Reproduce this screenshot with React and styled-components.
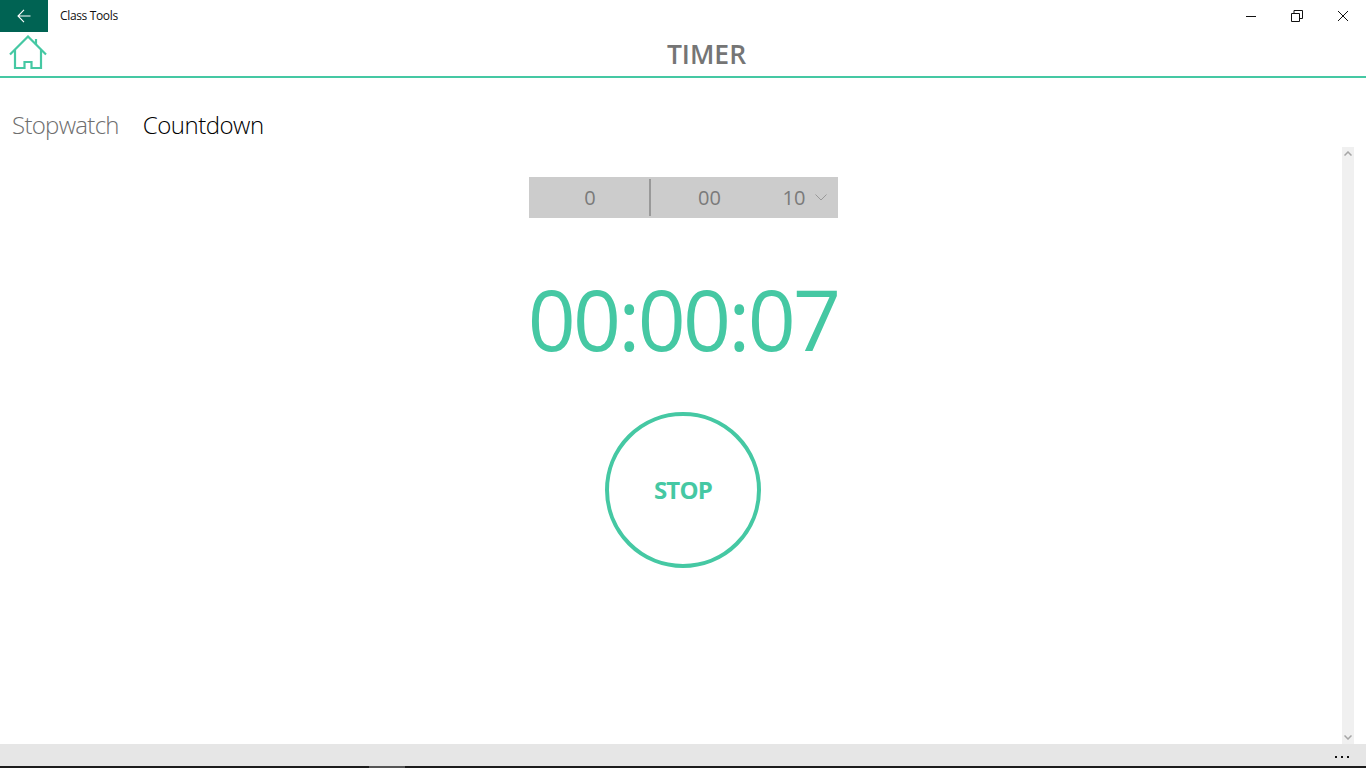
import React from 'react';
import styled, { createGlobalStyle } from 'styled-components';

const GlobalStyle = createGlobalStyle`
  html, body {
    margin: 0;
    padding: 0;
    background: #fff;
  }
  body {
    font-family: "Open Sans", "Noto Sans", sans-serif;
  }
`;

const App = () => {
  return (
    <Page>
      <GlobalStyle />
      <TitleBar>
        <BackButton>
          <svg width="16" height="16" viewBox="0 0 16 16" fill="none" stroke="#fff" strokeWidth="1.1">
            <path d="M2.5 8H14.5M8 1.8L2 8l6 6.2" />
          </svg>
        </BackButton>
        <AppName>Class Tools</AppName>
        <WindowControls>
          <WindowButton>
            <svg width="12" height="12" viewBox="0 0 12 12" stroke="#111" fill="none">
              <path d="M1 6.5H11" />
            </svg>
          </WindowButton>
          <WindowButton>
            <svg width="12" height="12" viewBox="0 0 12 12" stroke="#111" fill="none">
              <path d="M.5 3.5h8v8h-8zM3 3.5V.5h8.500v8H8.500" />
            </svg>
          </WindowButton>
          <WindowButton>
            <svg width="12" height="12" viewBox="0 0 12 12" stroke="#111" fill="none">
              <path d="M1 1L11 11M11 1L1 11" />
            </svg>
          </WindowButton>
        </WindowControls>
      </TitleBar>

      <Header>
        <HomeLink>
          <svg width="38" height="36" viewBox="0 0 38 36" fill="none" stroke="#45c8a3" strokeWidth="2.2">
            <path d="M1 19.500L19 1.500l18 18" />
            <path d="M27 10V4" />
            <path d="M6 15v18h9.500v-6h7v6H32V15" />
          </svg>
        </HomeLink>
        <PageTitle>TIMER</PageTitle>
      </Header>

      <Tabs>
        <Tab>Stopwatch</Tab>
        <Tab $active>Countdown</Tab>
      </Tabs>

      <ScrollArea>
        <Content>
          <TimePicker>
            <PickerCell $width={120} $nudge={3}>0</PickerCell>
            <PickerDivider />
            <PickerCell $width={118}>00</PickerCell>
            <PickerLast>
              10
              <svg width="12" height="7" viewBox="0 0 12 7" fill="none" stroke="#999">
                <path d="M.5.500L6 6l5.500-5.500" />
              </svg>
            </PickerLast>
          </TimePicker>
          <Clock>00:00:07</Clock>
          <StopButton>STOP</StopButton>
        </Content>
        <ScrollBar>
          <svg width="8" height="5" viewBox="0 0 8 5" fill="none" stroke="#a6a6a6" strokeWidth="1.500">
            <path d="M.5 4.500L4 1l3.500 3.500" />
          </svg>
          <svg width="8" height="5" viewBox="0 0 8 5" fill="none" stroke="#a6a6a6" strokeWidth="1.500">
            <path d="M.5.500L4 4l3.500-3.500" />
          </svg>
        </ScrollBar>
      </ScrollArea>

      <CommandBar>
        <MoreDots>
          <Dot />
          <Dot />
          <Dot />
        </MoreDots>
      </CommandBar>
      <Taskbar>
        <TaskbarItem />
      </Taskbar>
    </Page>
  );
};

const Page = styled.div`
  width: 1366px;
  height: 768px;
  display: flex;
  flex-direction: column;
  overflow: hidden;
  background: #fff;
`;

const TitleBar = styled.div`
  height: 32px;
  display: flex;
  align-items: center;
  flex: none;
`;

const BackButton = styled.div`
  width: 48px;
  height: 32px;
  background: #006353;
  display: flex;
  align-items: center;
  justify-content: center;
`;

const AppName = styled.div`
  margin-left: 12px;
  margin-top: -1px;
  font-size: 12px;
  letter-spacing: -0.35px;
  color: #111;
`;

const WindowControls = styled.div`
  margin-left: auto;
  display: flex;
`;

const WindowButton = styled.div`
  width: 46px;
  height: 32px;
  display: flex;
  align-items: center;
  justify-content: center;
`;

const Header = styled.div`
  height: 44px;
  flex: none;
  border-bottom: 2px solid #45c8a3;
  display: flex;
  align-items: center;
  justify-content: center;
  position: relative;
`;

const HomeLink = styled.div`
  position: absolute;
  left: 9px;
  top: 3px;
  height: 36px;
`;

const PageTitle = styled.div`
  font-size: 26.5px;
  font-weight: 600;
  color: #757575;
  margin-left: 47px;
`;

const Tabs = styled.div`
  height: 69px;
  flex: none;
  display: flex;
  align-items: center;
  gap: 24px;
  padding-left: 12px;
  padding-top: 23px;
  box-sizing: border-box;
`;

const Tab = styled.div`
  font-size: 24px;
  font-weight: 300;
  letter-spacing: ${(p) => (p.$active ? '-0.5px' : '-0.7px')};
  color: ${(p) => (p.$active ? '#000' : '#6e6e6e')};
`;

const ScrollArea = styled.div`
  flex: 1;
  display: flex;
  min-height: 0;
`;

const Content = styled.div`
  flex: 1;
  display: flex;
  flex-direction: column;
  align-items: center;
  padding-top: 30px;
  padding-left: 24px;
`;

const TimePicker = styled.div`
  width: 309px;
  height: 41px;
  background: #ccc;
  display: flex;
  align-items: center;
  color: #7a7a7a;
  font-size: 20px;
`;

const PickerCell = styled.div`
  width: ${(p) => p.$width}px;
  padding-left: ${(p) => p.$nudge || 0}px;
  box-sizing: border-box;
  text-align: center;
`;

const PickerDivider = styled.div`
  width: 2px;
  height: 37px;
  background: #999;
`;

const PickerLast = styled.div`
  flex: 1;
  display: flex;
  align-items: center;
  gap: 10px;
  padding-left: 14px;
  box-sizing: border-box;
`;

const Clock = styled.div`
  margin-top: 45px;
  font-size: 84px;
  line-height: 112px;
  font-weight: 400;
  letter-spacing: -2.7px;
  color: #45c8a3;
`;

const StopButton = styled.div`
  margin-top: 37px;
  width: 156px;
  height: 156px;
  box-sizing: border-box;
  border: 4px solid #45c8a3;
  border-radius: 50%;
  display: flex;
  align-items: center;
  justify-content: center;
  padding-bottom: 2px;
  color: #45c8a3;
  font-size: 24px;
  font-weight: 700;
  letter-spacing: -0.8px;
`;

const ScrollBar = styled.div`
  width: 12px;
  margin-right: 12px;
  background: #f0f0f0;
  display: flex;
  flex-direction: column;
  align-items: center;
  justify-content: space-between;
  padding: 4px 0;
  box-sizing: border-box;
`;

const CommandBar = styled.div`
  height: 22px;
  flex: none;
  background: #e6e6e6;
  display: flex;
  align-items: center;
  justify-content: flex-end;
`;

const MoreDots = styled.div`
  display: flex;
  gap: 4px;
  margin-right: 17px;
  margin-top: 3px;
`;

const Dot = styled.div`
  width: 2px;
  height: 2px;
  background: #111;
`;

const Taskbar = styled.div`
  height: 2px;
  flex: none;
  background: #1c1c1c;
  padding-left: 369px;
`;

const TaskbarItem = styled.div`
  width: 36px;
  height: 2px;
  background: #555;
`;

export default App;
